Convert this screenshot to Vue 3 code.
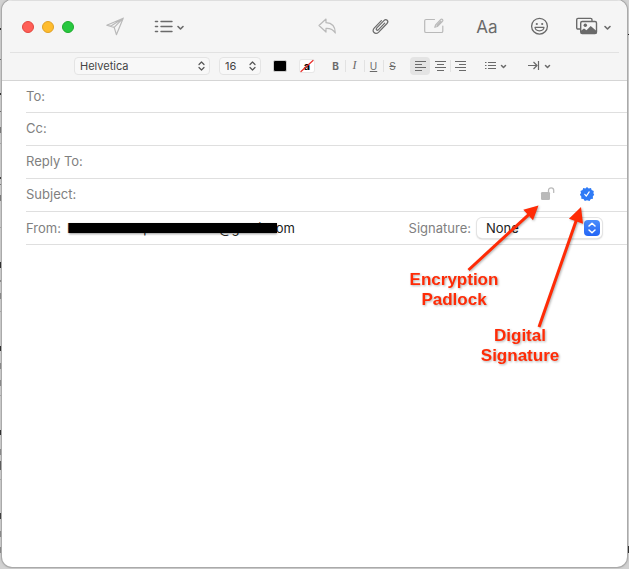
<script setup>
import { ref } from 'vue'

const font = ref('Helvetica')
const size = ref('16')
const signature = ref('None')
const align = ref('left')
const to = ref('')
const cc = ref('')
const replyTo = ref('')
const subject = ref('')

// Slivers of the mailbox window that show at both sides of the compose window
const leftMarks = [
  { y: 28, h: 2, c: '#222' }, { y: 59, h: 1, c: '#666' }, { y: 93, h: 2, c: '#222' },
  { y: 111, h: 1, c: '#666' }, { y: 127, h: 6, c: '#777' }, { y: 143, h: 1, c: '#aaa' },
  { y: 177, h: 2, c: '#333' }, { y: 184, h: 1, c: '#777' }, { y: 195, h: 6, c: '#777' },
  { y: 227, h: 1, c: '#aaa' }, { y: 262, h: 6, c: '#222' }, { y: 280, h: 2, c: '#888' },
  { y: 293, h: 6, c: '#888' }, { y: 311, h: 1, c: '#aaa' }, { y: 346, h: 5, c: '#222' },
  { y: 363, h: 6, c: '#888' }, { y: 380, h: 6, c: '#888' }, { y: 395, h: 1, c: '#aaa' },
  { y: 430, h: 5, c: '#222' }, { y: 449, h: 6, c: '#888' }, { y: 461, h: 9, c: '#555' },
  { y: 479, h: 1, c: '#aaa' }, { y: 513, h: 6, c: '#333' }, { y: 531, h: 6, c: '#888' },
  { y: 547, h: 6, c: '#888' }
]
const rightMarks = [{ y: 34, h: 1, c: '#111' }, { y: 546, h: 7, c: '#222' }]
</script>

<template>
  <div class="desktop">
    <div class="sliver left" aria-hidden="true">
      <i v-for="m in leftMarks" :key="m.y" :style="{ top: m.y + 'px', height: m.h + 'px', background: m.c }"></i>
    </div>
    <div class="sliver right" aria-hidden="true">
      <i v-for="m in rightMarks" :key="m.y" :style="{ top: m.y + 'px', height: m.h + 'px', background: m.c }"></i>
    </div>

    <main class="window">
      <header class="chrome">
        <div class="toolbar">
          <div class="lights">
            <button class="light red" aria-label="Close"></button>
            <button class="light amber" aria-label="Minimize"></button>
            <button class="light green" aria-label="Zoom"></button>
          </div>
          <button class="icon send dim" aria-label="Send">
            <svg width="20" height="20" viewBox="0 0 20 20"><path d="M18.200 1.200 1.800 8.200l7.400 2.200 2.200 7.300zM18.200 1.200 9.200 10.400M18.200 1.200 5.600 9.300" /></svg>
          </button>
          <button class="icon" aria-label="Header fields">
            <svg width="30" height="20" viewBox="0 0 30 20">
              <path d="M6 4.500h11M6 9.500h11M6 14.500h11" stroke-width="1.400" />
              <path d="M.5 4.500h2M.5 9.500h2M.5 14.500h2" stroke-width="1.600" />
              <path d="m23 9.500 2.500 2.500L28 9.500" stroke-width="1.600" />
            </svg>
          </button>
          <div class="actions">
            <button class="icon dim" aria-label="Reply">
              <svg width="20" height="20" viewBox="0 0 20 20"><path d="M8 2 1 8.500 8 15v-3.600c4.500-.2 7 .8 9.300 4.600C17.300 10 14.500 6 8 5.700z" /></svg>
            </button>
            <button class="icon" aria-label="Attach">
              <svg width="20" height="20" viewBox="0 0 20 20"><path d="m13.700 6.200-6.400 6.600c-1.300 1.200-2.900-.3-1.700-1.700l7.300-7.500c2.400-2.300 5.300.5 3.100 2.900l-8.300 8.600c-3.500 3.300-7.500-.7-4.300-4.200l7-7.200" /></svg>
            </button>
            <button class="icon dim" aria-label="Markup">
              <svg width="20" height="20" viewBox="0 0 20 20"><path d="M10.500 2.500H2Q.7 2.500.7 3.800v10.400q0 1.300 1.300 1.300h15.500q1.300 0 1.300-1.300V9" /><path d="m10.800 10.300.8-2.400 5-5.300c1.300-1.200 3 .3 1.900 1.700l-5.200 5.200zM13 8.400l4-4.200" /></svg>
            </button>
            <button class="icon format" aria-label="Show format bar">Aa</button>
            <button class="icon" aria-label="Emoji">
              <svg width="20" height="20" viewBox="0 0 20 20"><circle cx="9.500" cy="9.200" r="7.900" stroke-width="1.300" /><circle class="fill" cx="6.800" cy="7" r="1.100" /><circle class="fill" cx="12.200" cy="7" r="1.100" /><path d="M5 10.300h9c-.4 4.700-8.600 4.700-9 0z" /></svg>
            </button>
          </div>
          <button class="icon" aria-label="Photos">
            <svg width="36" height="20" viewBox="0 0 36 20">
              <path d="M4 12H2Q.7 12 .7 10.700V2.700Q.7 1.400 2 1.400h12.700Q16 1.400 16 2.700V3.500" stroke-width="1.400" />
              <rect x="4.700" y="4.500" width="15.800" height="12" rx="1.500" stroke-width="1.400" />
              <circle class="fill" cx="9.300" cy="8.300" r="1.700" />
              <path class="fill" d="M5 16.500v-2.800l3-2.200 2.500 1.800L14.700 9l5.800 5v2.500z" />
              <path d="m29 9.500 2.500 2.500L34 9.500" stroke-width="1.600" />
            </svg>
          </button>
        </div>

        <div class="formatbar">
          <div class="picker font">
            <select v-model="font" aria-label="Font"><option>Helvetica</option></select>
            <svg width="7" height="10" viewBox="0 0 7 10"><path d="M1 3.500 3.500 1 6 3.500M1 6.500 3.500 9 6 6.500" /></svg>
          </div>
          <div class="picker size">
            <select v-model="size" aria-label="Font size"><option>16</option></select>
            <svg width="7" height="10" viewBox="0 0 7 10"><path d="M1 3.500 3.500 1 6 3.500M1 6.500 3.500 9 6 6.500" /></svg>
          </div>
          <button class="swatch ink" aria-label="Text colour"></button>
          <button class="swatch paper" aria-label="Highlight colour">a
            <svg width="14" height="12" viewBox="0 0 14 12"><path d="M1 11.500 13 .5" /></svg>
          </button>
          <div class="group">
            <button class="cell"><b>B</b></button>
            <button class="cell"><em>I</em></button>
            <button class="cell"><u>U</u></button>
            <button class="cell"><s>S</s></button>
          </div>
          <div class="group aligns">
            <button class="cell" :class="{ on: align === 'left' }" aria-label="Align left" @click="align = 'left'">
              <svg width="11" height="10" viewBox="0 0 11 10"><path d="M0 .5h11M0 3.500h7M0 6.500h11M0 9.500h7" /></svg>
            </button>
            <button class="cell" :class="{ on: align === 'center' }" aria-label="Align center" @click="align = 'center'">
              <svg width="11" height="10" viewBox="0 0 11 10"><path d="M0 .5h11M2 3.500h7M0 6.500h11M2 9.500h7" /></svg>
            </button>
            <button class="cell" :class="{ on: align === 'right' }" aria-label="Align right" @click="align = 'right'">
              <svg width="11" height="10" viewBox="0 0 11 10"><path d="M0 .5h11M4 3.500h7M0 6.500h11M4 9.500h7" /></svg>
            </button>
          </div>
          <button class="menu" aria-label="Lists">
            <svg width="22" height="10" viewBox="0 0 22 10"><path d="M3 1.500h8M3 4.500h8M3 7.500h8M0 1.500h1.500M0 4.500h1.500M0 7.500h1.500" /><path class="chev" d="m16.500 4.500 2 2 2-2" /></svg>
          </button>
          <button class="menu" aria-label="Indentation">
            <svg width="24" height="10" viewBox="0 0 24 10"><path class="indent" d="M0 4.500h9M5.500 1l3.500 3.500L5.500 8M10.500 0v9" /><path class="chev" d="m17.500 4.500 2 2 2-2" /></svg>
          </button>
        </div>
      </header>

      <form class="headers" @submit.prevent>
        <div class="row"><label for="to">To:</label><input id="to" v-model="to" type="text" /></div>
        <div class="row"><label for="cc">Cc:</label><input id="cc" v-model="cc" type="text" /></div>
        <div class="row"><label for="reply">Reply To:</label><input id="reply" v-model="replyTo" type="text" /></div>
        <div class="row">
          <label for="subject">Subject:</label><input id="subject" v-model="subject" type="text" />
          <div class="security">
            <button type="button" class="icon" aria-label="Encrypt">
              <svg width="14" height="14" viewBox="0 0 14 14"><rect class="lockbody" x="0" y="5" width="9" height="8" rx="1.200" /><path class="shackle" d="M7.500 5.500V3.200c0-3.200 5.200-3.200 5.200 0v2.200" /></svg>
            </button>
            <button type="button" class="icon" aria-label="Sign">
              <svg width="14" height="14" viewBox="0 0 14 14"><path class="seal" d="m7 0 1.700 1.500 2.300-.6.600 2.200 2.200.8-.4 2.300L14.200 7.800l-1.400 1.700.2 2.200-2.200.3-1.200 1.900L7 13.200 4.800 14l-1.300-1.900-2.200-.4V9.500L-.1 7.700 1 6 .5 3.900l2.100-.8L3.200 1l2.200.5z" /><path class="tick" d="m4.800 7.300 1.500 1.900 2.900-4.300" /></svg>
            </button>
          </div>
        </div>
        <div class="row from">
          <span class="label">From:</span>
          <output class="address" aria-label="From address">
            <span>P</span><span>p</span><span>@gmail.com</span>
          </output>
          <label class="siglabel" for="sig">Signature:</label>
          <div class="popup">
            <select id="sig" v-model="signature"><option>None</option></select>
            <span class="stepper"><svg width="8" height="12" viewBox="0 0 8 12"><path d="M1 4 4 1.200 7 4M1 8l3 2.800L7 8" /></svg></span>
          </div>
        </div>
      </form>

      <aside class="notes">
        <svg width="160" height="140" viewBox="0 0 160 140">
          <path d="M1.500 72 62 16.300M72 129 109.400 22" />
          <path class="head" d="M71.500 7.500 56.300 11.700 66 22.300zM114 9l-12.100 11.700L116 25.700z" />
        </svg>
        <p class="note encryption">Encryption<br />Padlock</p>
        <p class="note digital">Digital<br />Signature</p>
      </aside>
    </main>
  </div>
</template>

<style>
body { margin: 0; background: #d2d2d2; }
</style>

<style scoped>
* { box-sizing: border-box; }
.desktop {
  position: relative;
  min-height: 100vh;
  padding: 0 2px 2px;
  display: flex;
  overflow: hidden;
  background: #d2d2d2;
  font-family: Inter, "Liberation Sans", sans-serif;
}
.sliver { position: absolute; top: 0; bottom: 0; width: 10px; }
.sliver.left { left: 0; }
.sliver.right { right: 0; }
.sliver i { position: absolute; left: 0; right: 0; }
.sliver.left i { right: 8px; }
.sliver.right i { left: 8px; }
.window {
  position: relative;
  flex: 1;
  min-width: 0;
  background: #fff;
  border-radius: 10px;
  overflow: hidden;
  box-shadow: 0 0 0 1px #aaa, 0 0 3px #888;
}
.chrome { background: #f5f5f5; border-bottom: 1px solid #d5d5d5; border-top: 1px solid #dedede; }
button {
  appearance: none;
  border: 0;
  padding: 0;
  background: none;
  color: #6a6a6a;
  font: inherit;
  display: flex;
  align-items: center;
  justify-content: center;
}
svg { display: block; overflow: visible; fill: none; stroke: currentColor; stroke-width: 1.2; stroke-linecap: round; stroke-linejoin: round; }
.fill { fill: currentColor; stroke: none; }
.toolbar { height: 51px; display: flex; align-items: center; padding: 0 15px 0 20px; }
.lights { display: flex; gap: 8px; }
.light { width: 12px; height: 12px; border-radius: 50%; }
.red { background: #ff5f57; border: 1px solid #e2463f; }
.amber { background: #febc2e; border: 1px solid #e0a125; }
.green { background: #28c840; border: 1px solid #1eac2c; }
button.dim { color: #b9b9b9; }
.send { margin: 0 30px 0 31px; }
.actions { display: flex; align-items: center; gap: 33px; margin-left: auto; margin-right: 26px; }
.actions .icon { width: 20px; }
.format { font-size: 17px; line-height: 20px; }
.formatbar { height: 28px; display: flex; align-items: center; margin: 0 8px; padding: 0 0 2px 64px; border-top: 1px solid #e2e2e2; }
.picker { position: relative; height: 18px; color: #555; }
.picker.font { width: 136px; }
.picker.size { width: 42px; margin: 0 12px 0 9px; }
.picker select {
  appearance: none;
  display: block;
  width: 100%;
  height: 18px;
  padding: 0 0 0 5px;
  border: 1px solid #e4e4e4;
  border-radius: 4px;
  background: #f8f8f8;
  color: #444;
  font: 11px/16px Inter, sans-serif;
}
.picker svg { position: absolute; right: 5px; top: 4px; pointer-events: none; }
.swatch { width: 14px; height: 12px; border-radius: 2px; }
.ink { background: #000; border: 1px solid #ccc; }
.paper { position: relative; margin: 0 12px 0 13px; background: #fff; color: #000; font-size: 11px; font-weight: 700; line-height: 12px; box-shadow: 0 0 0 1px #e8e8e8; }
.paper svg { position: absolute; left: 0; top: 0; color: #e8302c; }
.group { display: flex; }
.cell { position: relative; width: 19px; height: 18px; border-radius: 4px; font-size: 10px; }
.cell em { font-family: "Liberation Serif", serif; font-size: 12px; }
.cell svg, .menu svg { stroke-width: 1; stroke-linecap: butt; }
.cell + .cell::before { content: ""; position: absolute; left: 0; top: 3px; height: 12px; border-left: 1px solid #e2e2e2; }
.aligns { margin: 0 15px 0 8px; }
.aligns .cell { width: 20px; }
.aligns .on { background: #e4e4e4; }
.aligns .on + .cell::before { display: none; }
.menu + .menu { margin-left: 21px; }
.menu .indent { stroke-width: 1.2; }
.menu .chev { stroke-width: 1.5; stroke-linecap: round; }
.headers { padding-left: 24px; font-size: 13px; line-height: 16px; }
.row { height: 33px; display: flex; align-items: center; padding-bottom: 2px; border-bottom: 1px solid #dfdfdf; }
.row:first-child { height: 32px; }
.row.from { padding-bottom: 0; }
label, .label { color: #808080; flex: none; }
input { flex: 1; min-width: 0; height: 22px; border: 0; outline: 0; padding: 0 6px; background: none; font: inherit; color: #222; }
.security { display: flex; gap: 25px; padding-right: 33px; }
.lockbody { fill: #bababa; stroke: none; }
.shackle { stroke: #bababa; stroke-width: 1.3; }
.seal { fill: #2f7bf6; stroke: none; }
.tick { stroke: #fff; stroke-width: 1.2; }
.address { position: relative; display: flex; justify-content: space-between; width: 228px; margin-left: 6px; color: #222; }
/* Redaction strip over the private part of the address */
.address::after { content: ""; position: absolute; left: 2px; right: 18px; top: 3px; height: 10px; background: #000; box-shadow: 0 1px 2px rgba(0, 0, 0, 0.4); }
.siglabel { margin-left: auto; }
.popup { position: relative; width: 125px; margin: 0 25px 0 6px; }
.popup select {
  appearance: none;
  display: block;
  width: 100%;
  height: 20px;
  padding: 0 0 0 9px;
  border: 0;
  border-radius: 5px;
  background: #fff;
  color: #222;
  font: inherit;
  box-shadow: 0 0 0 1px #e4e4e4, 0 1px 2px rgba(0, 0, 0, 0.35);
}
.stepper { position: absolute; right: 2px; top: 2px; width: 16px; height: 16px; border-radius: 4px; background: linear-gradient(#4a8dfb, #2365f5); color: #fff; display: flex; align-items: center; justify-content: center; pointer-events: none; }
.stepper svg { stroke-width: 1.5; }
.notes { position: absolute; right: 0; top: 198px; width: 160px; height: 170px; pointer-events: none; color: #ff2b06; filter: drop-shadow(1px 1px 1px rgba(0, 0, 0, 0.3)); }
.notes svg { stroke-width: 3; stroke-linecap: butt; }
.notes .head { fill: currentColor; stroke: none; }
.note { position: absolute; margin: 0; width: 100px; text-align: center; font: bold 17px/20px "Liberation Sans", Arial, sans-serif; }
.encryption { right: 123px; top: 72px; }
.digital { right: 57px; top: 128px; }
</style>
